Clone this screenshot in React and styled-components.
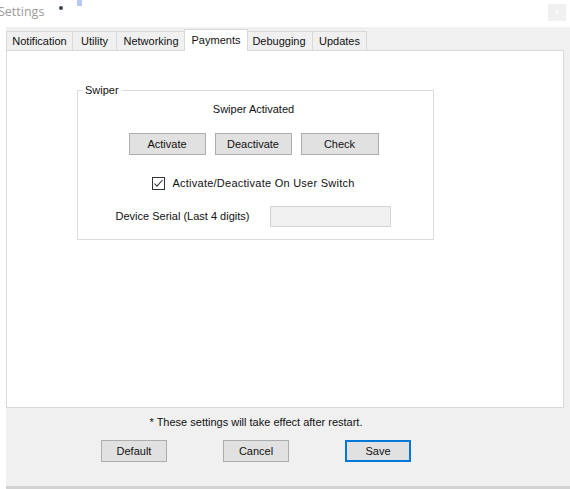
import React from 'react'
import styled, { createGlobalStyle } from 'styled-components'

const Global = createGlobalStyle`
  html, body { margin: 0; padding: 0; background: #fff; }
  body {
    font-family: "Liberation Sans", Arial, sans-serif;
    font-size: 11px;
    color: #000;
  }
`

const Window = styled.div`
  width: 570px;
  height: 489px;
  display: flex;
  flex-direction: column;
  overflow: hidden;
`

const TitleBar = styled.div`
  height: 27px;
  display: flex;
  align-items: flex-start;
  flex-shrink: 0;
`

const Title = styled.span`
  margin: 3px 0 0 -2px;
  font-family: "Open Sans", "Liberation Sans", sans-serif;
  font-size: 12.5px;
  color: #9b9b9b;
`

const Dot = styled.span`
  width: 4px;
  height: 4px;
  border-radius: 50%;
  background: #3f4954;
  margin: 6px 0 0 15px;
`

const Square = styled.span`
  width: 5px;
  height: 6px;
  background: #b5c8f7;
  margin-left: 14px;
`

const CloseBox = styled.span`
  margin: 4px 4px 0 auto;
  width: 18px;
  height: 17px;
  background: #f0f0f0;
  color: #fff;
  font-size: 10px;
  display: flex;
  align-items: center;
  justify-content: center;
`

const Form = styled.div`
  flex: 1;
  margin-left: 6px;
  background: #f0f0f0;
  display: flex;
  flex-direction: column;
`

const TabStrip = styled.div`
  height: 23px;
  display: flex;
  align-items: flex-end;
  flex-shrink: 0;
`

const Tab = styled.div`
  box-sizing: border-box;
  width: ${p => p.$w}px;
  height: ${p => (p.$active ? 22 : 19)}px;
  margin: ${p => (p.$active ? '0 -2px -1px' : '0')};
  position: relative;
  z-index: ${p => (p.$active ? 1 : 0)};
  background: ${p => (p.$active ? '#fff' : '#f0f0f0')};
  border: 1px solid #d9d9d9;
  border-bottom: none;
  border-left-width: ${p => (p.$first || p.$active ? 1 : 0)}px;
  display: flex;
  align-items: ${p => (p.$active ? 'flex-start' : 'center')};
  padding-top: ${p => (p.$active ? 4 : 0)}px;
  justify-content: center;
  color: #111;
`

const TabPage = styled.div`
  box-sizing: border-box;
  width: 558px;
  height: 358px;
  background: #fff;
  border: 1px solid #d9d9d9;
  flex-shrink: 0;
  padding-top: 33px;
  padding-left: 70px;
`

const Group = styled.fieldset`
  box-sizing: border-box;
  width: 357px;
  height: 156px;
  margin: 0;
  padding: 0;
  border: 1px solid #dcdcdc;
`

const Legend = styled.legend`
  margin-left: 4px;
  padding: 0 3px;
  line-height: 13px;
  color: #111;
`

const Content = styled.div`
  display: flex;
  flex-direction: column;
  align-items: center;
  padding-right: 4px;
`

const Status = styled.div`
  margin-top: 6px;
  line-height: 13px;
  color: #111;
`

const Row = styled.div`
  display: flex;
  align-items: center;
  gap: ${p => p.$gap}px;
  margin-top: ${p => p.$top}px;
`

const Button = styled.button`
  box-sizing: border-box;
  width: ${p => p.$w}px;
  height: 22px;
  padding: 0;
  font-family: inherit;
  font-size: 11px;
  color: #111;
  background: #e1e1e1;
  border: 1px solid ${p => (p.$focus ? '#0078d7' : '#adadad')};
  box-shadow: ${p => (p.$focus ? 'inset 0 0 0 1px #0078d7' : 'none')};
`

const CheckBox = styled.span`
  box-sizing: border-box;
  width: 13px;
  height: 13px;
  border: 1px solid #333;
  background: #fff;
  display: flex;
  align-items: center;
  justify-content: center;
`

const Label = styled.span`
  line-height: 13px;
  color: #111;
  letter-spacing: ${p => p.$spread || 0}px;
`

const TextBox = styled.div`
  box-sizing: border-box;
  width: 121px;
  height: 21px;
  background: #f0f0f0;
  border: 1px solid #d4d4d4;
`

const Footer = styled.div`
  flex: 1;
  width: 500px;
  display: flex;
  flex-direction: column;
  align-items: center;
`

const Note = styled.div`
  margin-top: 8px;
  line-height: 13px;
  color: #111;
`

const StatusStrip = styled.div`
  height: 3px;
  background: #d2d2d2;
  flex-shrink: 0;
`

const tabs = [
  { name: 'Notification', w: 67 },
  { name: 'Utility', w: 44 },
  { name: 'Networking', w: 69 },
  { name: 'Payments', w: 64, active: true },
  { name: 'Debugging', w: 67 },
  { name: 'Updates', w: 54 },
]

export default function App() {
  return (
    <Window>
      <Global />
      <TitleBar>
        <Title>Settings</Title>
        <Dot />
        <Square />
        <CloseBox>×</CloseBox>
      </TitleBar>
      <Form>
        <TabStrip>
          {tabs.map((t, i) => (
            <Tab key={t.name} $w={t.w} $active={t.active} $first={i === 0}>
              {t.name}
            </Tab>
          ))}
        </TabStrip>
        <TabPage>
          <Group>
            <Legend>Swiper</Legend>
            <Content>
              <Status>Swiper Activated</Status>
              <Row $top={17} $gap={9}>
                <Button $w={77}>Activate</Button>
                <Button $w={77}>Deactivate</Button>
                <Button $w={78}>Check</Button>
              </Row>
              <Row $top={22} $gap={7}>
                <CheckBox>
                  <svg width="11" height="11" viewBox="0 0 11 11">
                    <polyline points="1.5,5.5 4,8.2 9.5,2" fill="none" stroke="#333" strokeWidth="1.1" />
                  </svg>
                </CheckBox>
                <Label $spread={0.25}>Activate/Deactivate On User Switch</Label>
              </Row>
              <Row $top={16} $gap={21}>
                <Label>Device Serial (Last 4 digits)</Label>
                <TextBox />
              </Row>
            </Content>
          </Group>
        </TabPage>
        <Footer>
          <Note>* These settings will take effect after restart.</Note>
          <Row $top={11} $gap={56}>
            <Button $w={66}>Default</Button>
            <Button $w={66}>Cancel</Button>
            <Button $w={66} $focus>Save</Button>
          </Row>
        </Footer>
        <StatusStrip />
      </Form>
    </Window>
  )
}
